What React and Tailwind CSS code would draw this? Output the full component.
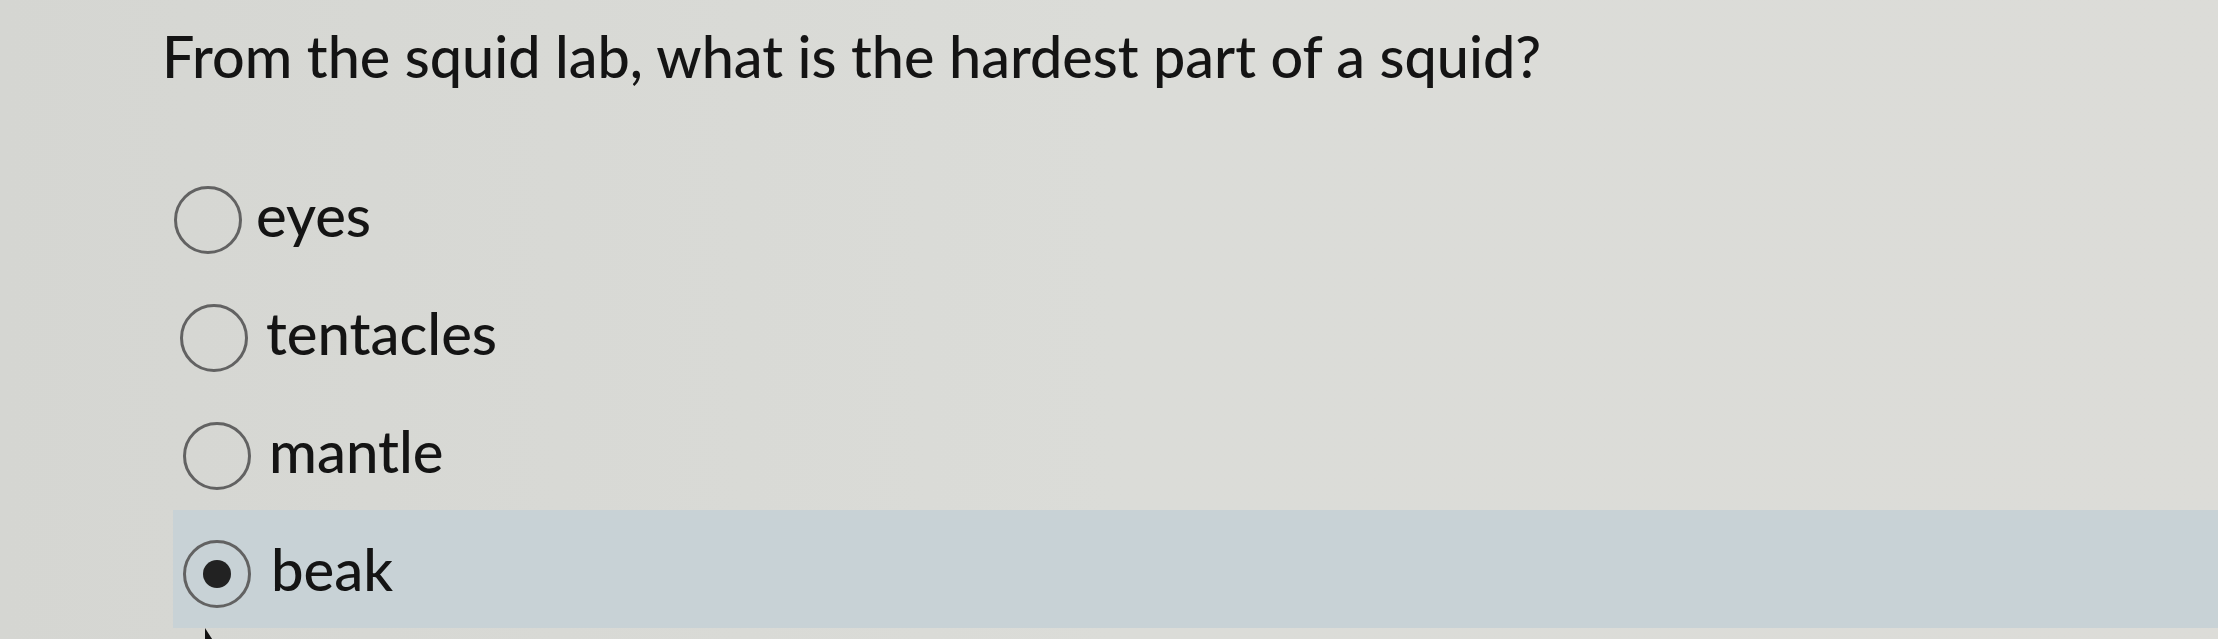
const options = [
  { label: "eyes", pad: "pl-[1px]", gap: "gap-[14px]" },
  { label: "tentacles", pad: "pl-[7px]", gap: "gap-[18px]" },
  { label: "mantle", pad: "pl-[10px]", gap: "gap-[18px]" },
  { label: "beak", pad: "pl-[10px]", gap: "gap-[20px]", selected: true },
];

function Radio({ selected }) {
  return (
    <span className="relative flex h-[68px] w-[68px] shrink-0 items-center justify-center rounded-full border-[3px] border-[#626262] translate-y-[5px]">
      {selected && <span className="h-[28px] w-[28px] rounded-full bg-[#222]" />}
    </span>
  );
}

export default function App() {
  return (
    <div
      className="relative h-[639px] w-full overflow-hidden bg-linear-to-r from-[#d5d6d2] via-[#dbdcd8] to-[#dcdcd8] text-[#141414]"
      style={{ fontFamily: "Lato, 'Open Sans', sans-serif" }}
    >
      <h1 className="pl-[162px] pt-[21px] text-[57.5px] leading-[1.2] font-medium">
        From the squid lab, what is the hardest part of a squid?
      </h1>

      <div className="mt-[66px] pl-[173px]">
        {options.map((o) => (
          <div
            key={o.label}
            className={
              "flex h-[118px] items-center " +
              o.pad +
              " " +
              o.gap +
              (o.selected ? " bg-[#c8d2d6]" : "")
            }
          >
            <Radio selected={o.selected} />
            <span className="text-[58px] leading-[1.2] font-medium">{o.label}</span>
          </div>
        ))}
      </div>

      {/* mouse pointer tip peeking in at the bottom */}
      <svg className="absolute left-[205px] top-[628px]" width="14" height="14" viewBox="0 0 14 14">
        <path d="M0 0 L0 14 L9 14 Z" fill="#111" />
      </svg>
    </div>
  );
}
